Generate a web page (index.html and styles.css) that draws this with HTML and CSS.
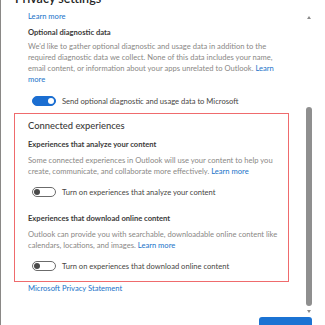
FILE: index.html
```html
<!DOCTYPE html>
<html lang="en">

<head>
    <meta charset="UTF-8">
    <meta name="viewport" content="width=device-width, initial-scale=1.0">
    <title>Privacy settings</title>
    <link rel="stylesheet" href="styles.css">
</head>

<body>
    <div class="dialog">
        <h1 class="title">Privacy settings</h1>
        <div class="pane">
            <div class="content">
                <div class="block">
                    <a href="#" class="link">Learn more</a>
                    <h3 class="sub first">Optional diagnostic data</h3>
                    <p class="desc">We'd like to gather optional diagnostic and usage data in addition to the
                        required diagnostic data we collect. None of this data includes your name,
                        email content, or information about your apps unrelated to Outlook. <a href="#"
                            class="link">Learn more</a></p>
                    <label class="toggle-row">
                        <span class="toggle on"></span>
                        <span>Send optional diagnostic and usage data to Microsoft</span>
                    </label>
                </div>

                <div class="connected">
                    <h2 class="section">Connected experiences</h2>
                    <h3 class="sub">Experiences that analyze your content</h3>
                    <p class="desc">Some connected experiences in Outlook will use your content to help you
                        create, communicate, and collaborate more effectively. <a href="#" class="link">Learn more</a></p>
                    <label class="toggle-row">
                        <span class="toggle"></span>
                        <span>Turn on experiences that analyze your content</span>
                    </label>

                    <h3 class="sub second">Experiences that download online content</h3>
                    <p class="desc">Outlook can provide you with searchable, downloadable online content like
                        calendars, locations, and images. <a href="#" class="link">Learn more</a></p>
                    <label class="toggle-row">
                        <span class="toggle"></span>
                        <span>Turn on experiences that download online content</span>
                    </label>
                </div>

                <div class="block">
                    <a href="#" class="link">Microsoft Privacy Statement</a>
                </div>
            </div>
            <div class="scrollbar">
                <span class="arrow up"></span>
                <div class="track">
                    <div class="thumb"></div>
                </div>
                <span class="arrow down"></span>
            </div>
        </div>
        <div class="footer">
            <button type="button" class="close">Close</button>
        </div>
    </div>
</body>

</html>
```

FILE: styles.css
```css
body {
    margin: 0;
    background-color: white;
    font-family: Lato, "Noto Sans", sans-serif;
    color: #323130;
    overflow: hidden;
}

.dialog {
    height: 325px;
    border-left: 1px solid #8a8886;
    padding-left: 13px;
    display: flex;
    flex-direction: column;
}

.title {
    margin: -9px 0 0 1px;
    font-size: 12.5px;
    line-height: 16px;
    font-weight: 600;
    color: #242424;
}

.pane {
    display: flex;
    margin-top: 4px;
}

.content {
    width: 275px;
}

.block {
    padding-left: 14px;
}

.link {
    color: #1a73c9;
    text-decoration: none;
    font-size: 7.6px;
    line-height: 11px;
}

.block > .link {
    display: block;
}

.sub {
    margin: 6px 0 0;
    font-size: 7.6px;
    line-height: 11px;
    font-weight: 700;
    color: #3b3a39;
}

.sub.first {
    margin-top: 5px;
}

.sub.second {
    margin-top: 16px;
}

.desc {
    margin: 3px 0 0;
    width: 252px;
    font-size: 7.6px;
    line-height: 11px;
    color: #8a8886;
}

.connected .desc {
    margin-top: 5px;
}

.toggle-row {
    display: flex;
    align-items: center;
    gap: 6px;
    margin: 11px 0 0 4px;
    font-size: 7.6px;
    line-height: 10px;
    color: #484644;
}

.connected .toggle-row {
    margin-top: 10px;
}

.toggle {
    width: 20px;
    height: 8px;
    border: 1px solid #6b6b6b;
    border-radius: 6px;
    background-color: white;
    display: flex;
    align-items: center;
    padding: 0 1px;
}

.toggle::after {
    content: "";
    width: 6px;
    height: 6px;
    border-radius: 50%;
    background-color: #4a4a4a;
}

.toggle.on {
    background-color: #1b6ed1;
    border-color: #1b6ed1;
    justify-content: flex-end;
}

.toggle.on::after {
    background-color: white;
}

.connected {
    margin-top: 7px;
    border: 1px solid #ef6b6d;
    padding: 5px 0 10px 13px;
}

.section {
    margin: 0;
    font-size: 9.4px;
    line-height: 14px;
    font-weight: 500;
    color: #3b3a39;
}

.connected + .block {
    margin-top: 1px;
}

.scrollbar {
    margin: 5px 0 0 17px;
    width: 6px;
    display: flex;
    flex-direction: column;
    align-items: center;
}

.arrow {
    width: 0;
    height: 0;
    border-left: 2px solid transparent;
    border-right: 2px solid transparent;
}

.arrow.up {
    border-bottom: 3px solid #8a8a8a;
}

.arrow.down {
    border-top: 3px solid #8a8a8a;
}

.track {
    width: 6px;
    height: 287px;
    margin: 2px 0;
    padding-top: 86px;
    box-sizing: border-box;
    background-image: radial-gradient(#ececec 30%, transparent 31%);
    background-size: 2px 2px;
}

.thumb {
    width: 6px;
    height: 199px;
    border-radius: 3px;
    background-color: #8f8f8f;
}

.footer {
    display: flex;
    justify-content: flex-end;
    padding-right: 13px;
    margin-top: 4px;
}

.close {
    width: 53px;
    height: 24px;
    border: none;
    border-radius: 3px;
    background-color: #1b73d3;
    color: white;
    font-family: Lato, "Noto Sans", sans-serif;
    font-size: 9px;
    font-weight: 600;
    padding: 0;
}
```
